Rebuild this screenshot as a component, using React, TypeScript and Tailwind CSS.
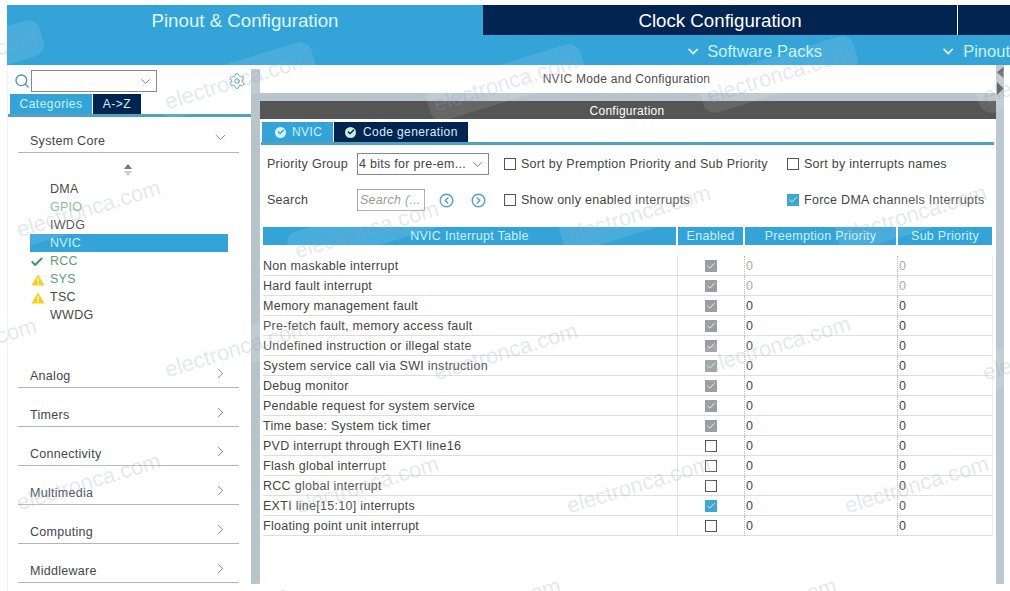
import { Search, Settings, ChevronDown, ChevronRight, Check, CircleChevronLeft, CircleChevronRight } from "lucide-react";

const rows: [string, "gray" | "off" | "blue", boolean][] = [
  ["Non maskable interrupt", "gray", true],
  ["Hard fault interrupt", "gray", true],
  ["Memory management fault", "gray", false],
  ["Pre-fetch fault, memory access fault", "gray", false],
  ["Undefined instruction or illegal state", "gray", false],
  ["System service call via SWI instruction", "gray", false],
  ["Debug monitor", "gray", false],
  ["Pendable request for system service", "gray", false],
  ["Time base: System tick timer", "gray", false],
  ["PVD interrupt through EXTI line16", "off", false],
  ["Flash global interrupt", "off", false],
  ["RCC global interrupt", "off", false],
  ["EXTI line[15:10] interrupts", "blue", false],
  ["Floating point unit interrupt", "off", false],
];

const marks: [number, number][] = [
  [156, 62], [425, 64], [698, 56], [974, 56],
  [8, 190], [286, 211], [558, 195], [834, 195],
  [156, 330], [425, 333], [698, 326], [974, 333],
  [8, 463], [286, 466], [558, 466], [836, 466],
  [-116, 40], [-116, 328], [408, 588], [684, 588], [136, 596],
];

function Box({ kind }: { kind: "gray" | "off" | "blue" }) {
  if (kind === "off") return <span className="block w-[12px] h-[12px] border border-[#555] bg-white" />;
  return (
    <span className={`flex w-[12px] h-[12px] items-center justify-center ${kind === "gray" ? "bg-[#9a9ea2]" : "bg-[#3ea6d3]"}`}>
      <Check size={10} strokeWidth={2} className="text-white" />
    </span>
  );
}

function Group({ name }: { name: string }) {
  return (
    <div className="h-[39px] ml-[10px] mr-[12px] flex items-end justify-between border-b border-[#b5b5b5] pl-[12px] pr-[10px] pb-[1px] text-[#3f4650]">
      <span>{name}</span>
      <ChevronRight size={17} strokeWidth={1} className="mb-[4px] text-[#555]" />
    </div>
  );
}

function Warn() {
  return (
    <svg width="14" height="12" viewBox="0 0 14 12" className="absolute left-[-19px] top-[2px]">
      <path d="M7 0.5 L13.6 11.5 L0.4 11.5 Z" fill="#f4cf1d" />
      <rect x="6.4" y="4" width="1.3" height="4.2" fill="#fff" />
      <rect x="6.4" y="9" width="1.3" height="1.3" fill="#fff" />
    </svg>
  );
}

function Item({ name, color, sel, icon }: { name: string; color?: string; sel?: boolean; icon?: React.ReactNode }) {
  return (
    <div className={`h-[18px] ml-[22px] w-[198px] pl-[20px] leading-[18px] relative ${sel ? "bg-[#34a4d8] text-[#c4f3ff]" : color ?? "text-[#4a4a4a]"}`}>
      <span className="relative">
        {icon}
        {name}
      </span>
    </div>
  );
}

export default function App() {
  return (
    <div className="relative w-[1010px] h-[591px] overflow-hidden bg-white text-[12.5px] tracking-[0.28px] font-['Liberation_Sans',Arial,sans-serif]">
      {/* top tabs */}
      <div className="pt-[5px] pl-[7px]">
        <div className="flex h-[30px] text-[18.7px] tracking-normal">
          <div className="w-[476px] bg-[#34a4d8] text-[#dff7ff] flex items-center justify-center pt-[2px]">Pinout &amp; Configuration</div>
          <div className="w-[474px] bg-[#022450] text-white flex items-center justify-center pt-[2px]">Clock Configuration</div>
          <div className="flex-1 bg-[#022450] border-l border-white" />
        </div>
        <div className="h-[30px] bg-[#34a4d8] text-[#c4f3ff] text-[16.5px] tracking-normal flex items-center overflow-hidden whitespace-nowrap pt-[2px]">
          <ChevronDown size={17} strokeWidth={2.5} className="ml-[678px] text-[#d6f8ff]" />
          <span className="ml-[6px] w-[242px]">Software Packs</span>
          <ChevronDown size={17} strokeWidth={2.5} className="text-[#d6f8ff]" />
          <span className="ml-[7px]">Pinout</span>
        </div>
      </div>

      <div className="flex h-[526px] pl-[7px]">
        {/* sidebar */}
        <div className="w-[244px] shrink-0 border-l border-[#eef3f4]">
          <div className="flex items-center h-[29px] pt-[3px] pl-[6px]">
            <Search size={16} strokeWidth={2} className="text-[#4a97a9]" />
            <div className="ml-[1px] w-[126px] h-[22px] border border-[#888] bg-white flex justify-end items-center pr-[3px]">
              <ChevronDown size={15} strokeWidth={1.2} className="text-[#555]" />
            </div>
            <Settings size={18} strokeWidth={1.2} className="ml-[71px] text-[#4a97a9]" />
          </div>
          <div className="flex h-[20px] pl-[2px] text-[12px] tracking-[0.5px]">
            <div className="w-[82px] bg-[#34a4d8] text-[#c4f3ff] flex items-center justify-center">Categories</div>
            <div className="w-[48px] ml-px bg-[#022450] text-[#d6eef8] flex items-center justify-center">A-&gt;Z</div>
          </div>
          <div className="h-[3px] bg-[#4fa3bf]" />
          <div className="h-[36px] ml-[10px] mr-[12px] flex items-end justify-between border-b border-[#b5b5b5] pl-[12px] pr-[10px] pb-[4px] text-[#3f4650]">
            <span className="relative top-[3px]">System Core</span>
            <ChevronDown size={17} strokeWidth={1} className="mb-[2px] text-[#555]" />
          </div>
          <div className="h-[27px] flex flex-col items-center justify-end pb-[3px] pr-[4px] text-[#8a8a8a]">
            <svg width="10" height="12" viewBox="0 0 10 12" className="mb-[1px]">
              <path d="M5 0 L9 5 L1 5 Z" fill="#777" />
              <path d="M5 12 L9 7 L1 7 Z" fill="#ccc" />
            </svg>
          </div>
          <div>
            <Item name="DMA" />
            <Item name="GPIO" color="text-[#7db58c]" />
            <Item name="IWDG" />
            <Item name="NVIC" sel />
            <Item
              name="RCC"
              color="text-[#5c9c78]"
              icon={<Check size={14} strokeWidth={3.5} className="absolute left-[-20px] top-[1px] text-[#3f9a6b]" />}
            />
            <Item name="SYS" color="text-[#5c9c78]" icon={<Warn />} />
            <Item name="TSC" icon={<Warn />} />
            <Item name="WWDG" />
          </div>
          <div className="h-[25px]" />
          <Group name="Analog" />
          <Group name="Timers" />
          <Group name="Connectivity" />
          <Group name="Multimedia" />
          <Group name="Computing" />
          <Group name="Middleware" />
        </div>

        {/* gutter */}
        <div className="w-[9px] shrink-0 mt-[4px] h-[515px] bg-[#b8c4cc]" />

        {/* main */}
        <div className="w-[736px] shrink-0">
          <div className="h-[28px] flex items-center justify-center text-[#4a4a4a] text-[12px] pr-[3px]">NVIC Mode and Configuration</div>
          <div className="h-[8px] bg-[#b8c4cc]" />
          <div className="h-[18px] bg-[#555] text-white text-[12px] flex items-center justify-center pr-[2px] pt-[1px]">Configuration</div>
          <div className="flex h-[20px] mt-[3px] pl-[2px] text-[12px] tracking-[0.4px]">
            <div className="w-[71px] bg-[#34a4d8] text-[#c4f3ff] flex items-center pl-[13px] gap-[6px]">
              <span className="w-[11px] h-[11px] rounded-full bg-[#d8f4fb] flex items-center justify-center"><Check size={8} strokeWidth={4} className="text-[#34a4d8]" /></span>
              NVIC
            </div>
            <div className="w-[134px] ml-px bg-[#022450] text-[#d6eef8] flex items-center pl-[11px] gap-[7px]">
              <span className="w-[11px] h-[11px] rounded-full bg-[#c9ecd8] flex items-center justify-center"><Check size={8} strokeWidth={4} className="text-[#022450]" /></span>
              Code generation
            </div>
          </div>
          <div className="h-[3px] ml-[1px] mr-[2px] bg-[#4fa3bf]" />

          {/* controls */}
          <div className="grid grid-cols-[90px_147px_283px_1fr] pl-[7px] text-[#444] h-[72px] pt-[8px]">
            <div className="h-[22px] flex items-center">Priority Group</div>
            <div className="h-[22px]">
              <div className="w-[132px] h-[22px] border border-[#888] flex items-center justify-between pl-[1px] pr-[3px]">
                <span>4 bits for pre-em...</span>
                <ChevronDown size={15} strokeWidth={1.2} className="text-[#555]" />
              </div>
            </div>
            <div className="h-[22px] flex items-center gap-[5px]"><Box kind="off" />Sort by Premption Priority and Sub Priority</div>
            <div className="h-[22px] flex items-center gap-[5px]"><Box kind="off" />Sort by interrupts names</div>
            <div className="h-[22px] mt-[14px] relative top-[-3px] flex items-center">Search</div>
            <div className="h-[22px] mt-[11px] flex items-center">
              <div className="w-[68px] h-[22px] border border-[#aaa] flex items-center pl-[2px] italic text-[#999]">Search (...</div>
              <CircleChevronLeft size={15} strokeWidth={2.4} className="ml-[14px] text-[#4fa3bf]" />
              <CircleChevronRight size={15} strokeWidth={2.4} className="ml-[17px] text-[#4fa3bf]" />
            </div>
            <div className="h-[22px] mt-[11px] flex items-center gap-[5px]"><Box kind="off" />Show only enabled interrupts</div>
            <div className="h-[22px] mt-[11px] flex items-center gap-[5px]"><Box kind="blue" />Force DMA channels Interrupts</div>
          </div>

          {/* table */}
          <div className="ml-[3px] w-[730px] mt-[10px]">
            <div className="grid grid-cols-[415px_67px_153px_95px] h-[18px] text-[#c4f3ff] text-center leading-[18px]">
              <div className="bg-[#34a4d8] mr-[2px]">NVIC Interrupt Table</div>
              <div className="bg-[#34a4d8] mr-[2px]">Enabled</div>
              <div className="bg-[#34a4d8] mr-[2px]">Preemption Priority</div>
              <div className="bg-[#34a4d8] mr-[1px]">Sub Priority</div>
            </div>
            <div className="mt-[11px] text-[#444]">
              {rows.map(([name, kind, dim]) => (
                <div key={name} className="grid grid-cols-[415px_67px_153px_95px] h-[20px] border-b border-[#ddd] leading-[20px]">
                  <div className="border-r border-[#e2e2e2] whitespace-nowrap">{name}</div>
                  <div className="border-r border-dotted border-[#bbb] flex items-center justify-center pr-[1px]"><Box kind={kind} /></div>
                  <div className={`border-r border-dotted border-[#bbb] pl-[1px] ${dim ? "text-[#aaa]" : ""}`}>0</div>
                  <div className={`pl-[1px] border-r border-[#eee] ${dim ? "text-[#aaa]" : ""}`}>0</div>
                </div>
              ))}
            </div>
          </div>
        </div>

        {/* right gutter */}
        <div className="w-[8px] shrink-0 h-[519px] bg-[#bcc8cf]" />
      </div>

      {/* collapse arrows */}
      <svg width="7" height="29" viewBox="0 0 7 29" className="absolute left-[997px] top-[67px]">
        <path d="M6.5 0 L6.5 11 L0 5.5 Z" fill="#6a6a6a" />
        <path d="M0 15 L6.5 21.5 L0 28 Z" fill="#555" />
      </svg>

      {/* watermark */}
      {marks.map(([x, y]) => (
        <div
          key={`${x}-${y}`}
          className="absolute pointer-events-none px-[6px] py-[2px] rounded-xl bg-white/10 text-[22px] tracking-normal text-[#8ba3b8]/25 whitespace-nowrap -rotate-[17deg]"
          style={{ left: x, top: y }}
        >
          electronca.com
        </div>
      ))}
    </div>
  );
}
